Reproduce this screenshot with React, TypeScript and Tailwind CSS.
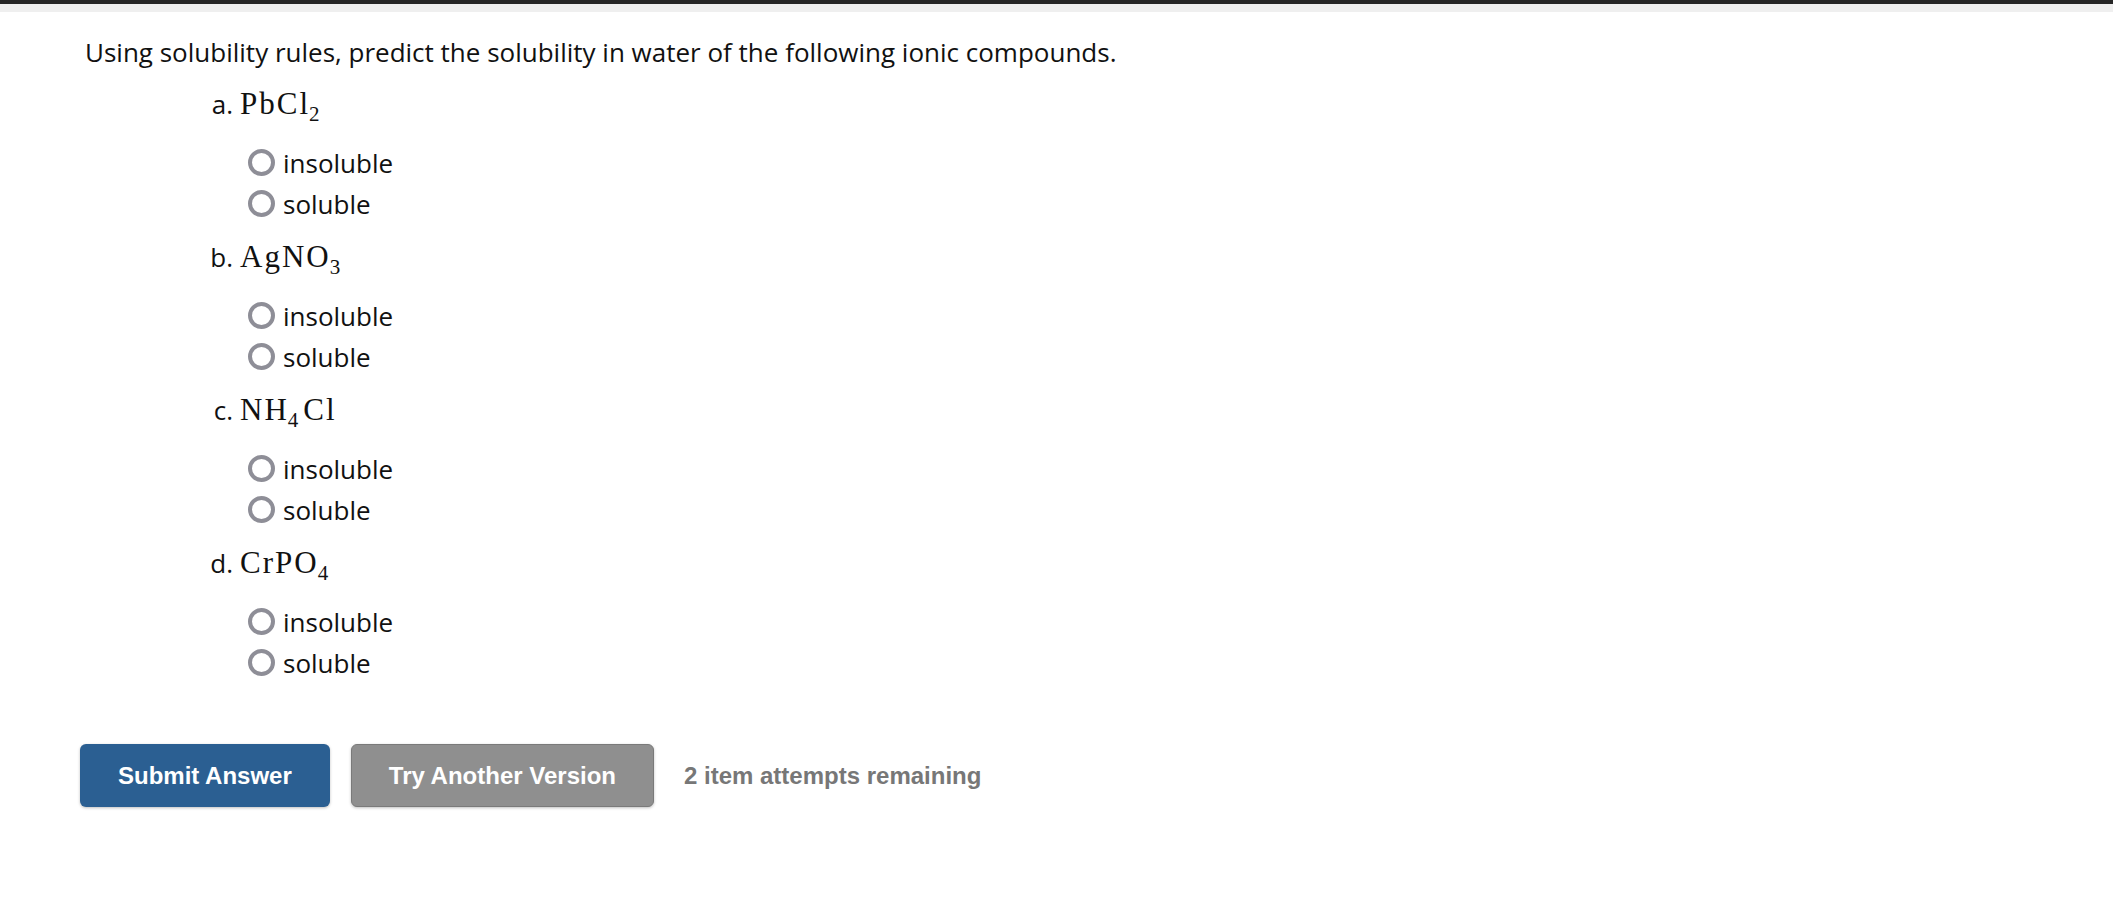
import React from "react";

type Item = {
  marker: string;
  formula: React.ReactNode;
};

const sans = "font-['Open_Sans',sans-serif]";
const math = "font-['Liberation_Serif',serif]";

function Sub({ children }: { children: React.ReactNode }) {
  return <span className="relative top-[7px] -ml-[1px] text-[21px] leading-none">{children}</span>;
}

const ITEMS: Item[] = [
  {
    marker: "a.",
    formula: (
      <>
        PbCl<Sub>2</Sub>
      </>
    ),
  },
  {
    marker: "b.",
    formula: (
      <>
        AgNO<Sub>3</Sub>
      </>
    ),
  },
  {
    marker: "c.",
    formula: (
      <>
        NH<Sub>4</Sub>
        <span className="ml-[3px]">Cl</span>
      </>
    ),
  },
  {
    marker: "d.",
    formula: (
      <>
        CrPO<Sub>4</Sub>
      </>
    ),
  },
];

function Radio({ label }: { label: string }) {
  return (
    <label className="flex h-[41px] items-center pl-[168px]">
      <span className="h-[27px] w-[27px] shrink-0 rounded-full border-[4px] border-[#8e8e97] bg-white" />
      <span className="ml-[8px] text-[26px] leading-[36px] text-[#111]">{label}</span>
    </label>
  );
}

export default function App() {
  return (
    <div className={`min-h-screen bg-white ${sans}`}>
      <div className="h-[4px] bg-[#262626]" />
      <div className="h-[8px] bg-[#efefef]" />

      <div className="pl-[80px] pt-[22px]">
        <p className="ml-[5px] text-[26px] leading-[36px] text-[#111]">
          Using solubility rules, predict the solubility in water of the following ionic compounds.
        </p>

        <div className="mt-[16px] flex flex-col gap-[15px]">
          {ITEMS.map((it) => (
            <div key={it.marker}>
              <div className="flex h-[36px] items-center">
                <span className="w-[153px] text-right text-[26px] leading-[36px] text-[#111]">{it.marker}</span>
                <span className={`ml-[7px] text-[31px] leading-[36px] tracking-[2px] text-[#111] ${math}`}>
                  {it.formula}
                </span>
              </div>
              <div className="mt-[20px]">
                <Radio label="insoluble" />
                <Radio label="soluble" />
              </div>
            </div>
          ))}
        </div>

        <div className="mt-[61px] flex items-center font-['Liberation_Sans',Arial,sans-serif] text-[24px] font-bold">
          <button className="h-[63px] rounded-[6px] bg-[#2b5f92] px-[38px] text-white shadow-[0_1px_3px_rgba(0,0,0,0.25)]">
            Submit Answer
          </button>
          <button className="ml-[21px] h-[63px] rounded-[6px] border border-[#7a7a7a] bg-[#8f8f8f] px-[37px] text-white shadow-[0_1px_3px_rgba(0,0,0,0.25)]">
            Try Another Version
          </button>
          <span className="ml-[30px] text-[#777]">2 item attempts remaining</span>
        </div>
      </div>
    </div>
  );
}
